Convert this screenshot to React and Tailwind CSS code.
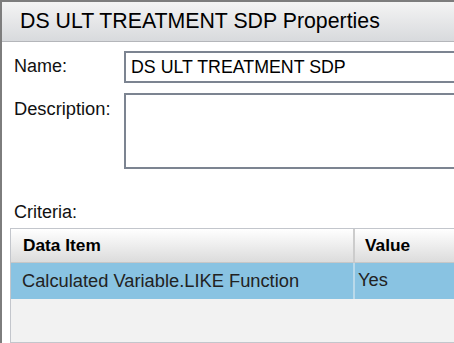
import React from 'react';

const font = { fontFamily: '"Liberation Sans", Arial, sans-serif' };

export default function App() {
  return (
    <div className="w-[454px] h-[343px] overflow-hidden bg-[#7d7d7d] pt-[2px] pl-[2px]" style={font}>
      <div className="flex flex-col h-full w-[470px] bg-white">
        {/* title bar */}
        <div className="h-[40px] shrink-0 flex items-center pl-[18px] bg-gradient-to-b from-[#f4f4f4] to-[#d8dadd] border-b border-[#b4b6ba] text-[21.3px] text-black">
          DS ULT TREATMENT SDP Properties
        </div>

        <div className="flex-1 flex flex-col bg-white pl-[8px]">
          {/* name */}
          <div className="flex mt-[9px] h-[32px]">
            <div className="w-[114px] pl-[4px] pt-[2px] text-[18px] text-[#111]">Name:</div>
            <div className="flex-1 border-2 border-[#7c8491] bg-white pl-[5px] flex items-center text-[17.8px] text-black">
              DS ULT TREATMENT SDP
            </div>
          </div>

          {/* description */}
          <div className="flex mt-[10px] h-[76px]">
            <div className="w-[114px] pl-[4px] pt-[2px] text-[18.3px] text-[#111]">Description:</div>
            <div className="flex-1 border-2 border-[#7c8491] bg-white"></div>
          </div>

          {/* criteria */}
          <div className="pl-[4px] mt-[33px] text-[18px] text-[#111] leading-[20px]">Criteria:</div>

          <div className="mt-[6px] flex-1 border border-[#c3c6cc] bg-[#f2f2f2] flex flex-col">
            <div className="flex h-[34px] bg-gradient-to-b from-white to-[#dcdcdc] border-b border-[#c7c7c7] text-[17.3px] font-bold text-black">
              <div className="w-[344px] pl-[12px] flex items-center border-r-2 border-[#cccccc]">Data Item</div>
              <div className="flex-1 pl-[10px] flex items-center">Value</div>
            </div>
            <div className="flex h-[36px] bg-[#89c3e2] text-[18.3px] text-[#222]">
              <div className="w-[344px] pl-[11px] flex items-center border-r-2 border-[#b9d9ea]">Calculated Variable.LIKE Function</div>
              <div className="flex-1 pl-[3px] pt-[3px]">Yes</div>
            </div>
          </div>
        </div>
      </div>
    </div>
  );
}
